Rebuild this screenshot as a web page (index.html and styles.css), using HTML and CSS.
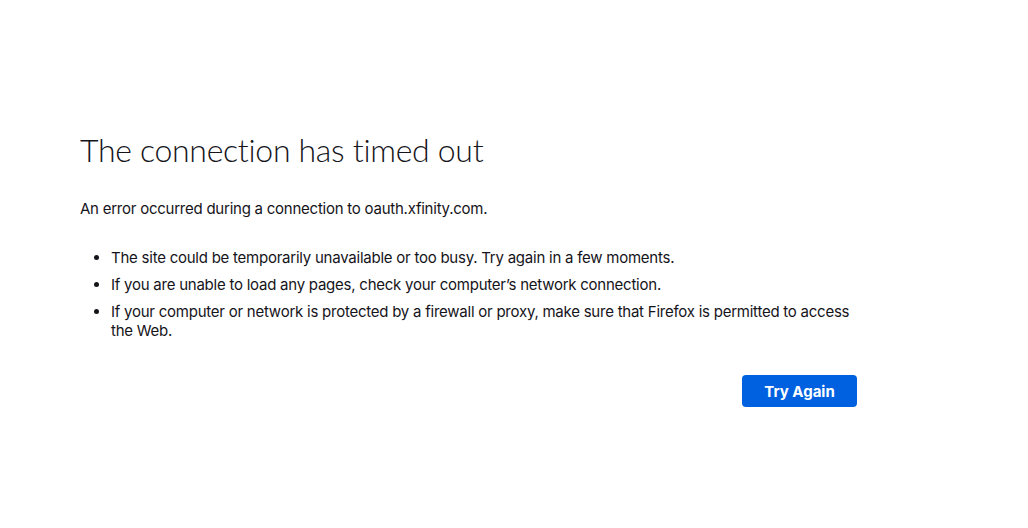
FILE: index.html
```html
<!DOCTYPE html>
<html lang="en">
<head>
    <meta charset="UTF-8">
    <title>Problem loading page</title>
    <link rel="stylesheet" href="styles.css">
</head>
<body>
    <div class="container">
        <h1 class="title-text">The connection has timed out</h1>
        <p class="short-desc">An error occurred during a connection to oauth.xfinity.com.</p>
        <ul class="long-desc">
            <li>The site could be temporarily unavailable or too busy. Try again in a few moments.</li>
            <li>If you are unable to load any pages, check your computer’s network connection.</li>
            <li>If your computer or network is protected by a firewall or proxy, make sure that Firefox is permitted to access the Web.</li>
        </ul>
        <div class="button-container">
            <button id="try-again">Try Again</button>
        </div>
    </div>
</body>
</html>
```

FILE: styles.css
```css
body {
    margin: 0;
    padding: 131px 80px 0;
    font-family: Inter, "Noto Sans", sans-serif;
    color: #15141a;
    background: #fff;
}

.container {
    width: 777px;
}

.title-text {
    font-family: Lato, Inter, sans-serif;
    font-size: 32px;
    line-height: 38px;
    font-weight: 300;
    font-variant-ligatures: none;
    letter-spacing: -0.3px;
    margin: 0 0 30px;
}

.short-desc {
    font-size: 15px;
    line-height: 20px;
    letter-spacing: -0.24px;
    margin: 0 0 29px;
}

.long-desc {
    font-size: 15px;
    line-height: 20px;
    letter-spacing: -0.24px;
    margin: 0;
    padding-left: 31px;
}

.long-desc li {
    margin-bottom: 7px;
}

.long-desc li:last-child {
    margin-bottom: 0;
    line-height: 19px;
}

.button-container {
    display: flex;
    justify-content: flex-end;
    margin-top: 35px;
}

#try-again {
    width: 115px;
    height: 32px;
    border: none;
    border-radius: 4px;
    background: #0061e0;
    color: #fff;
    font-family: Inter, "Noto Sans", sans-serif;
    font-size: 15px;
    font-weight: 700;
    cursor: pointer;
}
```
